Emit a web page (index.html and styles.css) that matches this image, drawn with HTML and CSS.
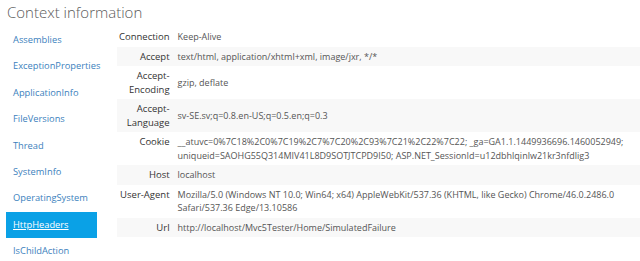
FILE: index.html
```html
<!DOCTYPE html>
<html lang="en">
<head>
    <meta charset="UTF-8">
    <title>Context information</title>
    <link rel="stylesheet" href="styles.css">
</head>
<body>

    <h1 class="title">Context information</h1>

    <div class="layout">
        <ul class="side-nav">
            <li><a href="#">Assemblies</a></li>
            <li><a href="#">ExceptionProperties</a></li>
            <li><a href="#">ApplicationInfo</a></li>
            <li><a href="#">FileVersions</a></li>
            <li><a href="#">Thread</a></li>
            <li><a href="#">SystemInfo</a></li>
            <li><a href="#">OperatingSystem</a></li>
            <li class="active"><a href="#">HttpHeaders</a></li>
            <li><a href="#">IsChildAction</a></li>
        </ul>

        <table class="headers">
            <tr>
                <th>Connection</th>
                <td>Keep-Alive</td>
            </tr>
            <tr>
                <th>Accept</th>
                <td>text/html, application/xhtml+xml, image/jxr, */*</td>
            </tr>
            <tr>
                <th>Accept-Encoding</th>
                <td>gzip, deflate</td>
            </tr>
            <tr>
                <th>Accept-Language</th>
                <td>sv-SE.sv;q=0.8.en-US;q=0.5.en;q=0.3</td>
            </tr>
            <tr>
                <th>Cookie</th>
                <td>__atuvc=0%7C18%2C0%7C19%2C7%7C20%2C93%7C21%2C22%7C22; _ga=GA1.1.1449936696.1460052949; uniqueid=SAOHG55Q314MIV41L8D9SOTJTCPD9I50; ASP.NET_SessionId=u12dbhlqinlw21kr3nfdlig3</td>
            </tr>
            <tr>
                <th>Host</th>
                <td>localhost</td>
            </tr>
            <tr>
                <th>User-Agent</th>
                <td>Mozilla/5.0 (Windows NT 10.0; Win64; x64) AppleWebKit/537.36 (KHTML, like Gecko) Chrome/46.0.2486.0 Safari/537.36 Edge/13.10586</td>
            </tr>
            <tr>
                <th>Url</th>
                <td>http://localhost/Mvc5Tester/Home/SimulatedFailure</td>
            </tr>
        </table>
    </div>

</body>
</html>
```

FILE: styles.css
```css
* {
    margin: 0;
    padding: 0;
    box-sizing: border-box;
}

body {
    font-family: 'Open Sans', 'Noto Sans', sans-serif;
    font-size: 9.5px;
    color: #555;
    background: #fff;
}

.title {
    font-size: 15px;
    font-weight: 300;
    color: #5a5a5a;
    line-height: 26px;
    padding-left: 7px;
    margin-top: -1px;
}

.layout {
    display: flex;
    align-items: flex-start;
    gap: 20px;
    padding-left: 6px;
    margin-top: 2px;
}

.side-nav {
    list-style: none;
    width: 91px;
    flex-shrink: 0;
}

.side-nav li + li {
    margin-top: 0.4px;
}

.side-nav a {
    display: block;
    padding: 5px 7px;
    line-height: 16px;
    font-size: 9.3px;
    color: #3c7fbd;
    text-decoration: none;
}

.side-nav .active a {
    background-color: #0aa1e6;
    color: #fff;
    text-decoration: underline;
}

.headers {
    flex: 1;
    border-collapse: collapse;
}

.headers tr:nth-child(even) {
    background-color: #f8f8f8;
}

.headers th,
.headers td {
    line-height: 13.5px;
    padding: 3px 0 3px 5px;
}

.headers th {
    width: 55px;
    text-align: right;
    vertical-align: top;
    font-weight: 400;
    color: #333;
    padding-left: 2px;
    padding-right: 3px;
}

.headers td {
    font-size: 9px;
    vertical-align: middle;
}
```
